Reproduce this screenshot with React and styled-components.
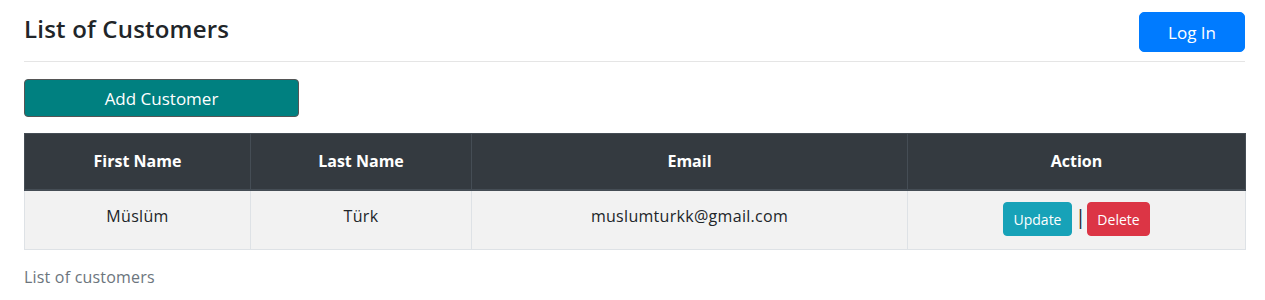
import React from "react";
import styled, { createGlobalStyle } from "styled-components";

const Global = createGlobalStyle`
  body { margin: 0; background: #fff; font-family: "Open Sans", "Noto Sans", sans-serif; color: #212529; }
  * { box-sizing: border-box; }
`;

const Page = styled.div`
  padding: 12px 20px 0 24px;
`;

const Header = styled.header`
  display: flex;
  justify-content: space-between;
  align-items: flex-start;
  height: 50px;
  border-bottom: 1px solid #e5e5e5;
`;

const Title = styled.h1`
  margin: 1px 0 0;
  font-size: 24px;
  font-weight: 600;
  line-height: 32px;
  color: #212529;
  letter-spacing: 0.2px;
`;

const Button = styled.button`
  font-family: inherit;
  color: #fff;
  background: ${(p) => p.$bg};
  border: 1px solid ${(p) => p.$border || p.$bg};
  border-radius: ${(p) => p.$radius || 4}px;
  font-size: ${(p) => p.$size || 16}px;
  height: ${(p) => p.$h}px;
  width: ${(p) => p.$w}px;
  padding: 0;
  cursor: pointer;
`;

const Toolbar = styled.div`
  padding: 17px 0 16px;
`;

const Table = styled.table`
  width: 100%;
  border-collapse: collapse;
  table-layout: fixed;
  text-align: center;
  caption-side: bottom;
`;

const Caption = styled.caption`
  text-align: left;
  color: #6c757d;
  font-size: 16px;
  padding-top: 16px;
  letter-spacing: 0.2px;
`;

const Th = styled.th`
  background: #343a40;
  color: #fff;
  font-weight: 700;
  font-size: 16px;
  height: 56px;
  border: 1px solid #454d55;
  border-bottom-width: 2px;
  padding-bottom: 2px;
`;

const Td = styled.td`
  background: #f2f2f2;
  font-size: 16px;
  height: 60px;
  border: 1px solid #dee2e6;
  padding-bottom: 8px;
  letter-spacing: 0.3px;
`;

const Actions = styled.div`
  display: inline-flex;
  align-items: center;
  gap: 3px;
  margin-top: 6px;
  letter-spacing: 0;
`;

const Sep = styled.span`
  width: 9px;
  text-align: center;
  font-size: 20px;
  line-height: 20px;
  color: #212529;
  margin-bottom: 4px;
`;

export default function App() {
  return (
    <Page>
      <Global />
      <Header>
        <Title>List of Customers</Title>
        <Button $bg="#007bff" $w={106} $h={40} $size={17} $radius={5}>Log In</Button>
      </Header>
      <Toolbar>
        <Button $bg="#008080" $border="#555" $w={275} $h={38} $size={17}>Add Customer</Button>
      </Toolbar>
      <Table>
        <colgroup>
          <col style={{ width: 226 }} />
          <col style={{ width: 221 }} />
          <col style={{ width: 436 }} />
          <col style={{ width: 338 }} />
        </colgroup>
        <thead>
          <tr>
            <Th>First Name</Th>
            <Th>Last Name</Th>
            <Th>Email</Th>
            <Th>Action</Th>
          </tr>
        </thead>
        <tbody>
          <tr>
            <Td>Müslüm</Td>
            <Td>Türk</Td>
            <Td>muslumturkk@gmail.com</Td>
            <Td>
              <Actions>
                <Button $bg="#17a2b8" $w={69} $h={34} $size={14}>Update</Button>
                <Sep>|</Sep>
                <Button $bg="#dc3545" $w={63} $h={34} $size={14}>Delete</Button>
              </Actions>
            </Td>
          </tr>
        </tbody>
        <Caption>List of customers</Caption>
      </Table>
    </Page>
  );
}
